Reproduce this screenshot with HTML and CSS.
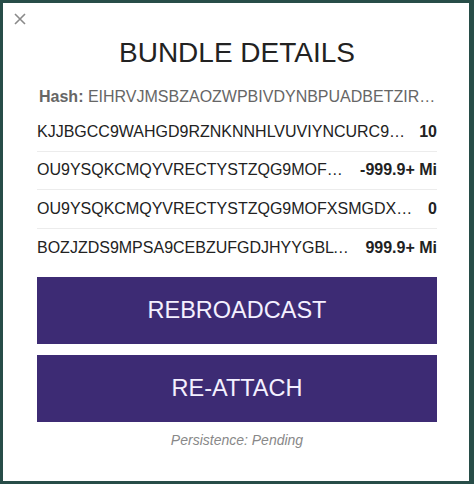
FILE: index.html
```html
<!DOCTYPE html>
<html lang="en">

<head>
    <meta charset="UTF-8">
    <meta name="viewport" content="width=device-width, initial-scale=1.0">
    <title>Bundle Details</title>
    <link rel="stylesheet" href="styles.css">
</head>

<body>
    <div class="modal">
        <button class="close" aria-label="Close">
            <svg width="12" height="12" viewBox="0 0 12 12">
                <path d="M1 1L11 11M11 1L1 11" stroke="#8a8a8a" stroke-width="1.6" fill="none" />
            </svg>
        </button>
        <div class="content">
            <h2 class="title">BUNDLE DETAILS</h2>
            <p class="hash"><strong>Hash:</strong> EIHRVJMSBZAOZWPBIVDYNBPUADBETZIRDGPAGNRULGEEKLSUSQWJDTKTWVFVBLDCAKAPCZDKSVHEY9999</p>
            <ul class="txs">
                <li class="tx">
                    <span class="address">KJJBGCC9WAHGD9RZNKNNHLVUVIYNCURC9DYQMZGNSPWGFOFELCEPRZNQGTWCHQZAYJSOXYSTHVBJIFJNX</span>
                    <span class="value">10</span>
                </li>
                <li class="tx">
                    <span class="address">OU9YSQKCMQYVRECTYSTZQG9MOFXSMGDXKPLCFDYATQVKWVBDXJYGNHADLZBUPLWHSLLAPVQZDHCPTCOUW</span>
                    <span class="value">-999.9+ Mi</span>
                </li>
                <li class="tx">
                    <span class="address">OU9YSQKCMQYVRECTYSTZQG9MOFXSMGDXKPLCFDYATQVKWVBDXJYGNHADLZBUPLWHSLLAPVQZDHCPTCOUW</span>
                    <span class="value">0</span>
                </li>
                <li class="tx">
                    <span class="address">BOZJZDS9MPSA9CEBZUFGDJHYYGBLYQWQZTDBSKVCAJOAHJXDWGDPHCRTZCVOMHEZCJZDGEJVQSNWYEPLP</span>
                    <span class="value">999.9+ Mi</span>
                </li>
            </ul>
            <button class="btn">REBROADCAST</button>
            <button class="btn">RE-ATTACH</button>
            <p class="persistence">Persistence: Pending</p>
        </div>
    </div>
</body>

</html>
```

FILE: styles.css
```css
* {
    margin: 0;
    padding: 0;
    box-sizing: border-box;
}

body {
    width: 474px;
    height: 484px;
    padding: 3px 5px 3px 3px;
    background-color: #274d48;
    font-family: "Liberation Sans", Arial, sans-serif;
}

.modal {
    position: relative;
    width: 466px;
    height: 478px;
    background-color: #fff;
    padding-top: 33px;
}

.close {
    position: absolute;
    top: 10px;
    left: 11px;
    width: 12px;
    height: 12px;
    border: none;
    background: none;
    cursor: pointer;
}

.close svg {
    display: block;
}

.content {
    width: 400px;
    margin-left: 34px;
    display: flex;
    flex-direction: column;
}

.title {
    font-size: 28px;
    font-weight: normal;
    line-height: 34px;
    color: #222;
    text-align: center;
}

.hash {
    margin-top: 17px;
    padding: 0 1px 0 2px;
    font-size: 16px;
    line-height: 20px;
    color: #666;
    white-space: nowrap;
    overflow: hidden;
    text-overflow: ellipsis;
    text-align: center;
}

.hash strong {
    color: #666;
}

.txs {
    list-style: none;
    margin-top: 6px;
}

.tx {
    display: flex;
    align-items: center;
    height: 38.5px;
    font-size: 16px;
    color: #222;
    border-bottom: 1px solid #ececec;
}

.tx:last-child {
    border-bottom: none;
}

.address {
    flex: 1;
    white-space: nowrap;
    overflow: hidden;
    text-overflow: ellipsis;
}

.value {
    padding-left: 14px;
    font-weight: bold;
    white-space: nowrap;
}

.btn {
    height: 67px;
    margin-top: 10px;
    background-color: #3d2b74;
    color: #f4f0ff;
    font-family: "Liberation Sans", Arial, sans-serif;
    font-size: 23.5px;
    border: none;
    cursor: pointer;
}

.btn + .btn {
    margin-top: 11px;
}

.persistence {
    margin-top: 9px;
    font-size: 14px;
    line-height: 18px;
    font-style: italic;
    color: #888;
    text-align: center;
}
```
